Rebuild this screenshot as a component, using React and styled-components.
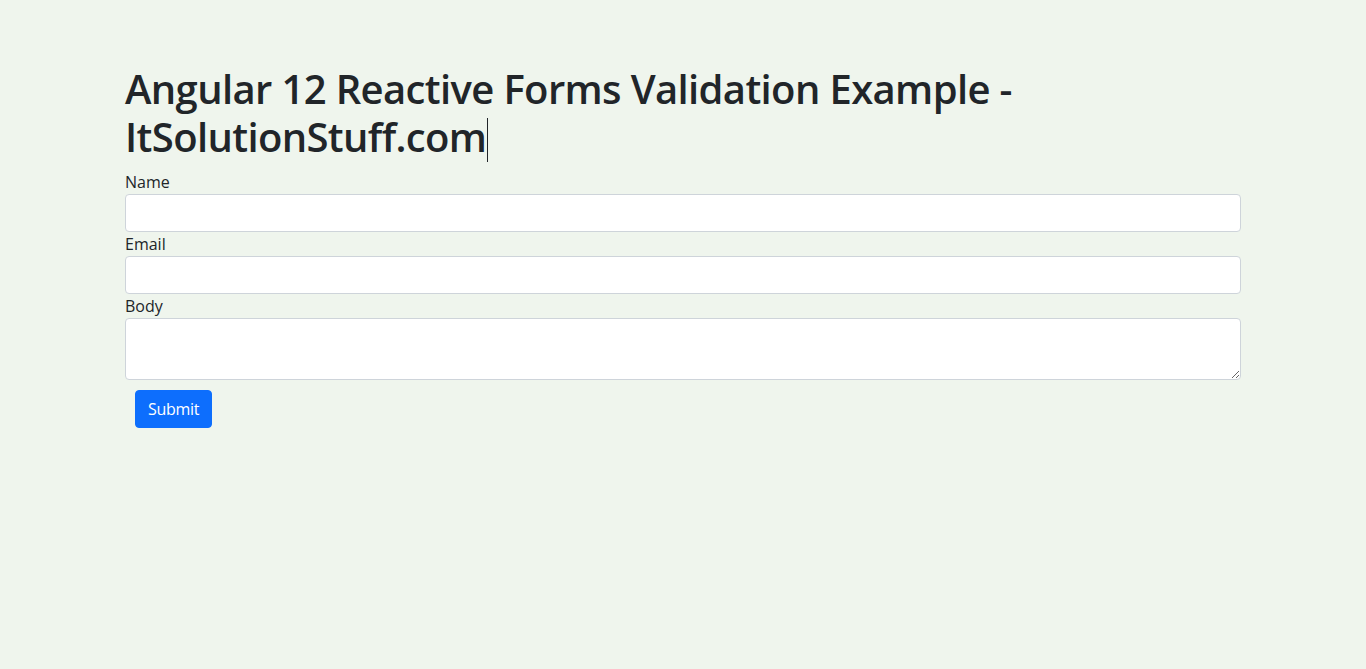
import React from 'react';
import styled, { createGlobalStyle } from 'styled-components';

const GlobalStyle = createGlobalStyle`
  html, body {
    margin: 0;
    padding: 0;
    background: #eff5ed;
  }
  body {
    font-family: "Open Sans", "Liberation Sans", sans-serif;
    font-size: 16px;
    line-height: 1.5;
    color: #212529;
  }
`;

const Container = styled.div`
  width: 1140px;
  box-sizing: border-box;
  margin: 0 auto;
  padding: 65px 12px 0 12px;
`;

const Title = styled.h1`
  margin: 0 0 8px 0;
  font-size: 40px;
  font-weight: 600;
  line-height: 1.2;
  letter-spacing: -0.63px;
`;

const Caret = styled.span`
  display: inline-block;
  width: 1px;
  height: 44px;
  margin-left: 1px;
  background: #212529;
  vertical-align: -10px;
`;

const Label = styled.label`
  display: block;
  font-size: 16px;
  line-height: 24px;
`;

const Input = styled.input`
  display: block;
  width: 100%;
  box-sizing: border-box;
  height: 38px;
  padding: 6px 12px;
  font: inherit;
  background: #fff;
  border: 1px solid #ced4da;
  border-radius: 4px;
  outline: none;
`;

const TextArea = styled.textarea`
  display: block;
  width: 100%;
  box-sizing: border-box;
  height: 62px;
  padding: 6px 12px;
  font: inherit;
  background: #fff;
  border: 1px solid #ced4da;
  border-radius: 4px;
  outline: none;
`;

const Button = styled.button`
  margin: 10px 0 0 10px;
  height: 38px;
  padding: 0 12px;
  font: inherit;
  letter-spacing: -0.3px;
  color: #fff;
  background: #0d6efd;
  border: 1px solid #0d6efd;
  border-radius: 4px;
  cursor: pointer;
`;

export default function App() {
  return (
    <Container>
      <GlobalStyle />
      <Title>
        Angular 12 Reactive Forms Validation Example - ItSolutionStuff.com<Caret />
      </Title>
      <form onSubmit={(e) => e.preventDefault()}>
        <Label htmlFor="name">Name</Label>
        <Input id="name" type="text" />
        <Label htmlFor="email">Email</Label>
        <Input id="email" type="text" />
        <Label htmlFor="body">Body</Label>
        <TextArea id="body" />
        <Button type="submit">Submit</Button>
      </form>
    </Container>
  );
}
